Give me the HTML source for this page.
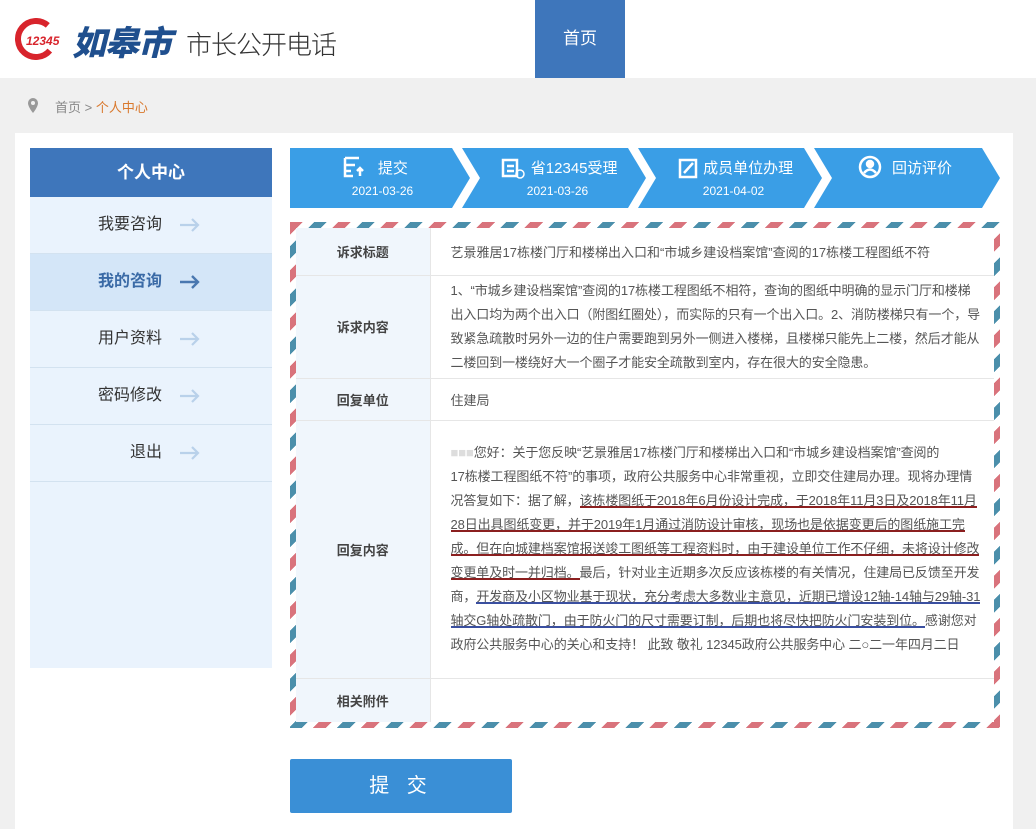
<!DOCTYPE html>
<html><head><meta charset="utf-8"><style>
*{margin:0;padding:0;box-sizing:border-box}
body{width:1036px;height:829px;overflow:hidden;background:#f0f0f0;font-family:"Liberation Sans","Noto Sans CJK SC",sans-serif;position:relative;color:#555}
.hdr{position:absolute;left:0;top:0;width:1036px;height:78px;background:#fff}
.nav{position:absolute;left:535px;top:0;width:90px;height:78px;background:#3e76bb;color:#fff;font-size:17px;text-align:center;line-height:78px}
.crumb{position:absolute;left:55px;top:97px;font-size:13px;color:#888}
.panel{position:absolute;left:15px;top:133px;width:998px;height:696px;background:#fff}
.side{position:absolute;left:30px;top:148px;width:242px;height:520px;background:#eaf3fd}
.side .h{height:49px;background:#3e76bb;color:#fff;font-weight:bold;font-size:17px;text-align:center;line-height:49px}
.side .it{height:57px;border-bottom:1px solid #d3e2f0;font-size:16px;color:#333;line-height:56px;position:relative}
.side .it span{position:absolute;right:110px}
.side .it svg{position:absolute;left:149px;top:21px}
.side .act{background:#d4e6f8;font-weight:bold;color:#3a6aa6}
.steps{position:absolute;left:290px;top:148px;width:712px;height:60px}
.st{position:absolute;top:0;height:60px;color:#fff;text-align:center}
.st .t{font-size:15px;margin-top:10px;height:22px;line-height:22px}
.st .d{font-size:12px;margin-top:4px}
.mail{position:absolute;left:290px;top:222px;width:710px;height:506px;background:repeating-linear-gradient(135deg,#d9737c 0 9px,#fff 9px 17px,#4b8fab 17px 26px,#fff 26px 34px)}
.inner{position:absolute;left:6px;top:6px;right:6px;bottom:6px;background:#fff}
table{border-collapse:collapse;width:100%}
td{border-bottom:1px solid #e6e6e6;font-size:13px;color:#555;vertical-align:middle}
td.l{width:134px;background:#f0f6fc;text-align:center;font-weight:bold;color:#444;border-right:1px solid #e6e6e6}
td.c{padding-left:20px}
.ln{white-space:nowrap;height:24px;line-height:24px;letter-spacing:-0.1px}
.r{box-shadow:inset 0 -2px 0 #8b1f1f}
.b{box-shadow:inset 0 -2px 0 #3a4fa0}
.btn{position:absolute;left:290px;top:759px;width:222px;height:54px;background:#3a8fd6;border-radius:2px;color:#fff;font-size:20px;text-align:center;line-height:54px;letter-spacing:6px}
</style></head><body>
<div class="hdr">
 <svg style="position:absolute;left:14px;top:18px" width="52" height="42"><circle cx="22" cy="21" r="18" fill="none" stroke="#d8242c" stroke-width="6" stroke-dasharray="85 30" transform="rotate(40 22 21)"/><text x="12" y="27" font-size="12" font-weight="bold" font-style="italic" fill="#d8242c" font-family="Liberation Sans">12345</text></svg>
 <div style="position:absolute;left:72px;top:16px;font-size:34px;font-weight:900;font-style:italic;color:#1f4f8e;letter-spacing:-1px">如皋市</div>
 <div style="position:absolute;left:186px;top:25px;font-size:26px;color:#333;font-weight:300;letter-spacing:-1px">市长公开电话</div>
 <div class="nav">首页</div>
</div>
<svg style="position:absolute;left:27px;top:97px" width="12" height="17"><path d="M6 1a5 5 0 0 1 5 5c0 4-5 10-5 10S1 10 1 6a5 5 0 0 1 5-5z" fill="#999"/><circle cx="6" cy="6" r="2" fill="#f0f0f0"/></svg>
<div class="crumb">首页 &gt; <span style="color:#d9782c">个人中心</span></div>
<div class="panel"></div>
<div class="side">
 <div class="h">个人中心</div>
 <div class="it"><span>我要咨询</span><svg width="22" height="14"><path d="M1 7h18M13 1l6 6-6 6" fill="none" stroke="#b9d1ea" stroke-width="2.2"/></svg></div>
 <div class="it act"><span>我的咨询</span><svg width="22" height="14"><path d="M1 7h18M13 1l6 6-6 6" fill="none" stroke="#4a78b0" stroke-width="2.4"/></svg></div>
 <div class="it"><span>用户资料</span><svg width="22" height="14"><path d="M1 7h18M13 1l6 6-6 6" fill="none" stroke="#b9d1ea" stroke-width="2.2"/></svg></div>
 <div class="it"><span>密码修改</span><svg width="22" height="14"><path d="M1 7h18M13 1l6 6-6 6" fill="none" stroke="#b9d1ea" stroke-width="2.2"/></svg></div>
 <div class="it"><span>退出</span><svg width="22" height="14"><path d="M1 7h18M13 1l6 6-6 6" fill="none" stroke="#b9d1ea" stroke-width="2.2"/></svg></div>
</div>
<div class="steps">
 <svg width="712" height="60" style="position:absolute;left:0;top:0">
  <polygon points="0,0 162,0 180,30 162,60 0,60" fill="#3a9ee6"/>
  <polygon points="172,0 338,0 356,30 338,60 172,60 190,30" fill="#3a9ee6"/>
  <polygon points="348,0 514,0 532,30 514,60 348,60 366,30" fill="#3a9ee6"/>
  <polygon points="524,0 692,0 710,30 692,60 524,60 542,30" fill="#3a9ee6"/>
  <g fill="none" stroke="#fff" stroke-width="2.5">
   <path d="M55 10h14M55 10v18h8M55 17h10M55 23h6M70 28v-8M67 23l3-3 3 3"/>
   <path d="M213 12h14v16h-14zM217 18h7M217 23h7"/><circle cx="230" cy="26" r="4" stroke-width="1.5"/>
   <path d="M390 12h16v17h-16zM394 25l9-10"/>
   <circle cx="580" cy="19" r="10"/><circle cx="580" cy="16" r="3" fill="#fff"/><path d="M574 25q6-7 12 0"/>
  </g>
 </svg>
 <div class="st" style="left:0;width:185px"><div class="t">&nbsp;&nbsp;&nbsp;&nbsp;&nbsp;提交</div><div class="d">2021-03-26</div></div>
 <div class="st" style="left:180px;width:175px"><div class="t">&nbsp;&nbsp;&nbsp;&nbsp;&nbsp;&nbsp;&nbsp;&nbsp;省12345受理</div><div class="d">2021-03-26</div></div>
 <div class="st" style="left:356px;width:175px"><div class="t">&nbsp;&nbsp;&nbsp;&nbsp;&nbsp;&nbsp;&nbsp;成员单位办理</div><div class="d">2021-04-02</div></div>
 <div class="st" style="left:532px;width:175px"><div class="t">&nbsp;&nbsp;&nbsp;&nbsp;&nbsp;&nbsp;回访评价</div></div>
</div>
<div class="mail"><div class="inner">
<table>
<tr style="height:47px"><td class="l">诉求标题</td><td class="c">艺景雅居17栋楼门厅和楼梯出入口和“市城乡建设档案馆”查阅的17栋楼工程图纸不符</td></tr>
<tr style="height:103px"><td class="l">诉求内容</td><td class="c">
<div class="ln">1、“市城乡建设档案馆”查阅的17栋楼工程图纸不相符，查询的图纸中明确的显示门厅和楼梯</div>
<div class="ln">出入口均为两个出入口（附图红圈处），而实际的只有一个出入口。2、消防楼梯只有一个，导</div>
<div class="ln">致紧急疏散时另外一边的住户需要跑到另外一侧进入楼梯，且楼梯只能先上二楼，然后才能从</div>
<div class="ln">二楼回到一楼绕好大一个圈子才能安全疏散到室内，存在很大的安全隐患。</div>
</td></tr>
<tr style="height:42px"><td class="l">回复单位</td><td class="c">住建局</td></tr>
<tr style="height:258px"><td class="l">回复内容</td><td class="c">
<div class="ln"><span style="color:#ddd">■■■</span>您好：关于您反映“艺景雅居17栋楼门厅和楼梯出入口和“市城乡建设档案馆”查阅的</div>
<div class="ln">17栋楼工程图纸不符”的事项，政府公共服务中心非常重视，立即交住建局办理。现将办理情</div>
<div class="ln">况答复如下：据了解，<span class="r">该栋楼图纸于2018年6月份设计完成，于2018年11月3日及2018年11月</span></div>
<div class="ln"><span class="r">28日出具图纸变更，并于2019年1月通过消防设计审核，现场也是依据变更后的图纸施工完</span></div>
<div class="ln"><span class="r">成。但在向城建档案馆报送竣工图纸等工程资料时，由于建设单位工作不仔细，未将设计修改</span></div>
<div class="ln"><span class="r">变更单及时一并归档。</span>最后，针对业主近期多次反应该栋楼的有关情况，住建局已反馈至开发</div>
<div class="ln">商，<span class="b">开发商及小区物业基于现状，充分考虑大多数业主意见，近期已增设12轴-14轴与29轴-31</span></div>
<div class="ln"><span class="b">轴交G轴处疏散门，由于防火门的尺寸需要订制，后期也将尽快把防火门安装到位。</span>感谢您对</div>
<div class="ln">政府公共服务中心的关心和支持！ 此致 敬礼 12345政府公共服务中心 二○二一年四月二日</div>
</td></tr>
<tr style="height:44px"><td class="l" style="border-bottom:none">相关附件</td><td class="c" style="border-bottom:none"></td></tr>
</table>
</div></div>
<div class="btn">提 交</div>
</body></html>
